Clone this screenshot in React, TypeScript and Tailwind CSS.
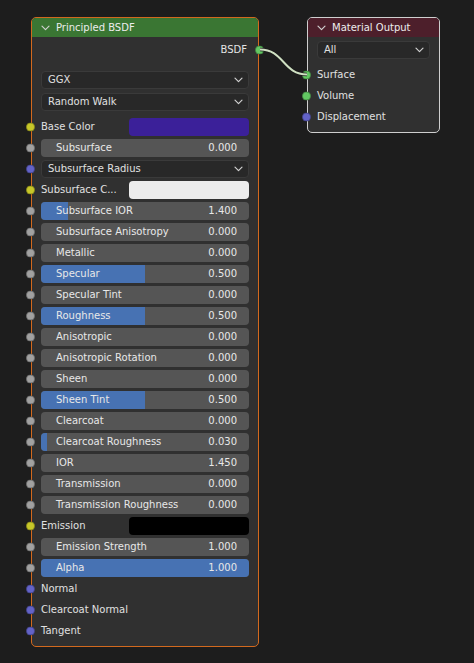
import type { ReactNode } from "react";

type Row =
  | { kind: "slider"; label: string; value: string; fill: number; socket: string }
  | { kind: "color"; label: string; swatch: string; socket: string }
  | { kind: "menu"; label: string; socket: string }
  | { kind: "label"; label: string; socket: string };

const GREY = "#a1a1a1";
const YELLOW = "#c7c729";
const PURPLE = "#6363c7";
const GREEN = "#63c763";

const rows: Row[] = [
  { kind: "color", label: "Base Color", swatch: "#3b2099", socket: YELLOW },
  { kind: "slider", label: "Subsurface", value: "0.000", fill: 0, socket: GREY },
  { kind: "menu", label: "Subsurface Radius", socket: PURPLE },
  { kind: "color", label: "Subsurface C...", swatch: "#ececec", socket: YELLOW },
  { kind: "slider", label: "Subsurface IOR", value: "1.400", fill: 0.13, socket: GREY },
  { kind: "slider", label: "Subsurface Anisotropy", value: "0.000", fill: 0, socket: GREY },
  { kind: "slider", label: "Metallic", value: "0.000", fill: 0, socket: GREY },
  { kind: "slider", label: "Specular", value: "0.500", fill: 0.5, socket: GREY },
  { kind: "slider", label: "Specular Tint", value: "0.000", fill: 0, socket: GREY },
  { kind: "slider", label: "Roughness", value: "0.500", fill: 0.5, socket: GREY },
  { kind: "slider", label: "Anisotropic", value: "0.000", fill: 0, socket: GREY },
  { kind: "slider", label: "Anisotropic Rotation", value: "0.000", fill: 0, socket: GREY },
  { kind: "slider", label: "Sheen", value: "0.000", fill: 0, socket: GREY },
  { kind: "slider", label: "Sheen Tint", value: "0.500", fill: 0.5, socket: GREY },
  { kind: "slider", label: "Clearcoat", value: "0.000", fill: 0, socket: GREY },
  { kind: "slider", label: "Clearcoat Roughness", value: "0.030", fill: 0.03, socket: GREY },
  { kind: "slider", label: "IOR", value: "1.450", fill: 0, socket: GREY },
  { kind: "slider", label: "Transmission", value: "0.000", fill: 0, socket: GREY },
  { kind: "slider", label: "Transmission Roughness", value: "0.000", fill: 0, socket: GREY },
  { kind: "color", label: "Emission", swatch: "#000000", socket: YELLOW },
  { kind: "slider", label: "Emission Strength", value: "1.000", fill: 0, socket: GREY },
  { kind: "slider", label: "Alpha", value: "1.000", fill: 1, socket: GREY },
  { kind: "label", label: "Normal", socket: PURPLE },
  { kind: "label", label: "Clearcoat Normal", socket: PURPLE },
  { kind: "label", label: "Tangent", socket: PURPLE }
];

function Chevron({ className }: { className?: string }) {
  return (
    <svg
      width="9"
      height="6"
      viewBox="0 0 9 6"
      className={className}>
      <path
        d="M1 1.2 L4.5 4.7 L8 1.2"
        fill="none"
        stroke="#d0d0d0"
        strokeWidth="1.2"
        strokeLinecap="round"
        strokeLinejoin="round"
      />
    </svg>
  );
}

function Socket({ color, side = "left" }: { color: string; side?: "left" | "right" }) {
  return (
    <span
      className={`absolute top-1/2 -translate-y-1/2 w-[9px] h-[9px] rounded-full border border-black/30 ${side === "left" ? "left-[-6px]" : "right-[-6px]"}`}
      style={{ backgroundColor: color }}
    />
  );
}

function Dropdown({ label, className }: { label: string; className?: string }) {
  return (
    <div className={`flex items-center justify-between h-[18px] rounded-[4px] bg-[#282828] border border-[#3a3a3a] pl-[6px] pr-[5px] text-[#e0e0e0] ${className ?? ""}`}>
      <span>{label}</span>
      <Chevron />
    </div>
  );
}

function Slider({ label, value, fill }: { label: string; value: string; fill: number }) {
  return (
    <div className="relative flex-1 h-[18px] rounded-[4px] bg-[#555555] overflow-hidden">
      {fill > 0 && (
        <div
          className="absolute inset-y-0 left-0 bg-[#4772b3]"
          style={{ width: `${fill * 100}%` }}
        />
      )}
      <div className="relative flex items-center justify-between h-full pl-[15px] pr-[12px] text-[#e8e8e8]">
        <span>{label}</span>
        <span>{value}</span>
      </div>
    </div>
  );
}

function NodeRow({ row }: { row: Row }) {
  let content: ReactNode = null;
  if (row.kind === "slider") content = <Slider label={row.label} value={row.value} fill={row.fill} />;
  if (row.kind === "menu") content = <Dropdown label={row.label} className="flex-1" />;
  if (row.kind === "label") content = <span className="text-[#e0e0e0]">{row.label}</span>;
  if (row.kind === "color")
    content = (
      <div className="flex flex-1 items-center justify-between">
        <span className="text-[#e0e0e0]">{row.label}</span>
        <div
          className="w-[120px] h-[18px] rounded-[4px]"
          style={{ backgroundColor: row.swatch }}
        />
      </div>
    );
  return (
    <div className="relative flex items-center h-[21px] px-[9px]">
      <Socket color={row.socket} />
      {content}
    </div>
  );
}

export default function App() {
  return (
    <div
      className="relative w-[474px] h-[663px] overflow-hidden bg-[#1d1d1d] text-[10px] leading-none"
      style={{ fontFamily: '"DejaVu Sans", "Liberation Sans", sans-serif' }}>
      {/* Principled BSDF */}
      <div className="absolute left-[31px] top-[17px] w-[228px] rounded-[5px] border border-[#d2691e] bg-[#303030] pb-[5px]">
        <div className="flex items-center gap-[6px] h-[19px] pl-[9px] rounded-t-[4px] bg-[#3a7633] text-[#ececec]">
          <Chevron />
          <span>Principled BSDF</span>
        </div>
        <div className="relative flex items-center justify-end h-[20px] mt-[3px] pr-[11px] text-[#e4e4e4]">
          <span>BSDF</span>
          <Socket
            color={GREEN}
            side="right"
          />
        </div>
        <div className="flex flex-col gap-[4px] mt-[11px] mb-[5px] px-[9px]">
          <Dropdown label="GGX" />
          <Dropdown label="Random Walk" />
        </div>
        {rows.map((row) => (
          <NodeRow
            key={row.label}
            row={row}
          />
        ))}
      </div>

      {/* Material Output */}
      <div className="absolute left-[307px] top-[17px] w-[133px] rounded-[5px] border border-[#cfcfcf] bg-[#303030] pb-[5px]">
        <div className="flex items-center gap-[6px] h-[19px] pl-[9px] rounded-t-[4px] bg-[#4d1f2b] text-[#ececec]">
          <Chevron />
          <span>Material Output</span>
        </div>
        <div className="mt-[4px] px-[9px]">
          <Dropdown label="All" />
        </div>
        <div className="mt-[5px]">
          {[
            { label: "Surface", color: GREEN },
            { label: "Volume", color: GREEN },
            { label: "Displacement", color: PURPLE }
          ].map((s) => (
            <div
              key={s.label}
              className="relative flex items-center h-[21px] px-[9px] text-[#e0e0e0]">
              <Socket color={s.color} />
              <span>{s.label}</span>
            </div>
          ))}
        </div>
      </div>

      {/* link */}
      <svg
        className="absolute inset-0 pointer-events-none"
        width="474"
        height="663">
        <path
          d="M 260 49.5 C 284 49.5, 283 74.5, 307 74.5"
          fill="none"
          stroke="#1a1a1a"
          strokeWidth="3.5"
        />
        <path
          d="M 260 49.5 C 284 49.5, 283 74.5, 307 74.5"
          fill="none"
          stroke="#cfe0c2"
          strokeWidth="2"
        />
      </svg>
    </div>
  );
}
